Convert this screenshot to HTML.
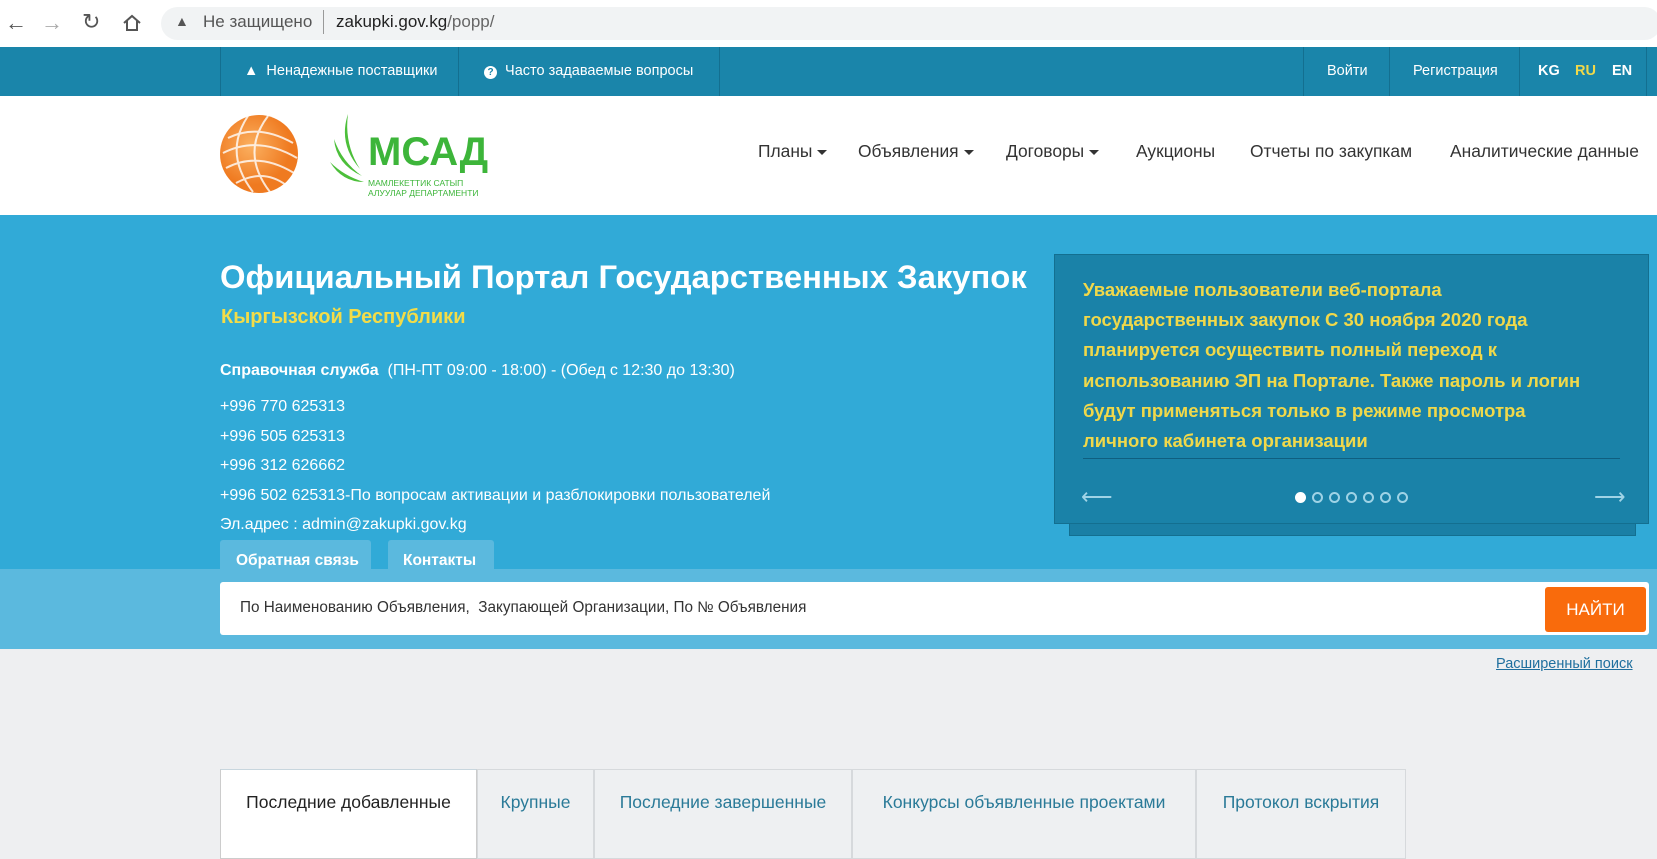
<!DOCTYPE html>
<html><head><meta charset="utf-8"><style>
*{box-sizing:border-box;margin:0;padding:0}
body{width:1657px;height:851px;overflow:hidden;font-family:"Liberation Sans",sans-serif;background:#eeeff1;position:relative}
.a{position:absolute;white-space:nowrap}
#br{left:0;top:0;width:1657px;height:47px;background:#fff}
#pill{left:161px;top:7px;width:1500px;height:33px;background:#f1f3f4;border-radius:17px}
#tb{left:0;top:47px;width:1657px;height:49px;background:#1a85aa}
.dv{position:absolute;top:0;width:1px;height:49px;background:#136f90}
.tt{color:#fff;font-size:14.5px;top:16px}
#hd{left:0;top:96px;width:1657px;height:119px;background:#fff}
.nv{font-size:17.4px;color:#333;top:45px}
.car{display:inline-block;width:0;height:0;border-left:5px solid transparent;border-right:5px solid transparent;border-top:5px solid #333;vertical-align:middle;margin-left:5px}
#hero{left:0;top:215px;width:1657px;height:354px;background:#31aad7}
#sb{left:0;top:569px;width:1657px;height:80px;background:#5bb9de}
.w{color:#fff;font-size:16px}
.tab{position:absolute;top:769px;height:90px;border:1px solid #d6d9dc;background:#eef0f2;color:#2a7a98;font-size:17.5px;text-align:center;padding-top:22px}
</style></head><body>
<div id="br" class="a"></div>
<div class="a" style="left:5px;top:10px;font-size:22px;color:#555">&#8592;</div>
<div class="a" style="left:41px;top:10px;font-size:22px;color:#aaa">&#8594;</div>
<div class="a" style="left:82px;top:9px;font-size:22px;color:#555">&#8635;</div>
<svg class="a" style="left:122px;top:13px" width="20" height="20" viewBox="0 0 20 20"><path d="M2 10 L10 3 L18 10 M5 8 V17 H15 V8" fill="none" stroke="#555" stroke-width="2"/></svg>
<div id="pill" class="a"></div>
<div class="a" style="left:175px;top:13px;font-size:14px;color:#555">&#9650;</div>
<div class="a" style="left:203px;top:12px;font-size:17px;color:#555">Не защищено</div>
<div class="a" style="left:323px;top:10px;width:1px;height:24px;background:#999"></div>
<div class="a" style="left:336px;top:12px;font-size:17px;color:#222">zakupki.gov.kg<span style="color:#666">/popp/</span></div>

<div id="tb" class="a">
<div class="dv" style="left:220px"></div><div class="dv" style="left:458px"></div><div class="dv" style="left:719px"></div>
<div class="dv" style="left:1303px"></div><div class="dv" style="left:1389px"></div><div class="dv" style="left:1519px"></div><div class="dv" style="left:1646px"></div>
<div class="a tt" style="left:244px">&#9650;&nbsp; Ненадежные поставщики</div>
<div class="a tt" style="left:484px"><span style="display:inline-block;width:13px;height:13px;border-radius:50%;background:#fff;color:#1a85aa;font-size:10px;font-weight:bold;text-align:center;line-height:13px">?</span>&nbsp; Часто задаваемые вопросы</div>
<div class="a tt" style="left:1327px">Войти</div>
<div class="a tt" style="left:1413px">Регистрация</div>
<div class="a tt" style="left:1538px;font-weight:bold">KG</div>
<div class="a tt" style="left:1575px;font-weight:bold;color:#f0d84a">RU</div>
<div class="a tt" style="left:1612px;font-weight:bold">EN</div>
</div>

<div id="hd" class="a">
<svg class="a" style="left:218px;top:17px" width="82" height="82" viewBox="0 0 82 82"><defs><radialGradient id="g" cx="40%" cy="40%"><stop offset="0" stop-color="#fbb060"/><stop offset="1" stop-color="#ef7a20"/></radialGradient></defs><circle cx="41" cy="41" r="39" fill="url(#g)"/><g fill="none" stroke="#fff" stroke-width="2" opacity=".8"><path d="M10 25 Q40 10 75 30"/><path d="M5 40 Q40 22 79 45"/><path d="M8 55 Q40 38 76 60"/><path d="M18 70 Q45 55 68 72"/><path d="M30 3 Q5 40 35 79"/><path d="M50 3 Q22 40 52 79"/></g></svg>
<svg class="a" style="left:330px;top:18px" width="40" height="80" viewBox="0 0 40 80"><g fill="#4cbf3a"><path d="M18 0 Q8 30 30 55 Q14 30 18 0Z"/><path d="M4 25 Q6 50 32 62 Q12 48 4 25Z"/><path d="M0 48 Q12 68 34 68 Q14 62 0 48Z"/></g></svg>
<div class="a" style="left:368px;top:34px;font-size:40px;color:#3db53a;font-weight:bold;letter-spacing:0px">МСАД</div>
<div class="a" style="left:368px;top:82px;font-size:8.5px;color:#3db53a">МАМЛЕКЕТТИК САТЫП<br>АЛУУЛАР ДЕПАРТАМЕНТИ</div>
<div class="a nv" style="left:758px">Планы<span class="car"></span></div>
<div class="a nv" style="left:858px">Объявления<span class="car"></span></div>
<div class="a nv" style="left:1006px">Договоры<span class="car"></span></div>
<div class="a nv" style="left:1136px">Аукционы</div>
<div class="a nv" style="left:1250px">Отчеты по закупкам</div>
<div class="a nv" style="left:1450px">Аналитические данные</div>
</div>

<div id="hero" class="a">
<div class="a" style="left:220px;top:43px;font-size:32.8px;font-weight:bold;color:#fff">Официальный Портал Государственных Закупок</div>
<div class="a" style="left:221px;top:91px;font-size:20px;font-weight:bold;color:#f3dc48">Кыргызской Республики</div>
<div class="a w" style="left:220px;top:147px"><b>Справочная служба</b>&nbsp; (ПН-ПТ 09:00 - 18:00) - (Обед с 12:30 до 13:30)</div>
<div class="a w" style="left:220px;top:183px">+996 770 625313</div>
<div class="a w" style="left:220px;top:213px">+996 505 625313</div>
<div class="a w" style="left:220px;top:242px">+996 312 626662</div>
<div class="a w" style="left:220px;top:272px">+996 502 625313-По вопросам активации и разблокировки пользователей</div>
<div class="a w" style="left:220px;top:301px">Эл.адрес : admin@zakupki.gov.kg</div>
<div class="a" style="left:220px;top:325px;width:151px;height:40px;background:#5bb9de;border-radius:3px 3px 0 0;color:#fff;font-weight:bold;font-size:15.5px;padding:12px 0 0 16px">Обратная связь</div>
<div class="a" style="left:388px;top:325px;width:106px;height:40px;background:#5bb9de;border-radius:3px 3px 0 0;color:#fff;font-weight:bold;font-size:15.5px;padding:12px 0 0 15px">Контакты</div>
<div class="a" style="left:1069px;top:300px;width:567px;height:21px;background:#1a7fa5;border:1px solid #136f90"></div>
<div class="a" style="left:1054px;top:39px;width:595px;height:270px;background:#1a82a8;border:1px solid #136f90;overflow:hidden">
<div style="position:absolute;left:28px;top:20px;width:560px;color:#f0d84a;font-weight:bold;font-size:18.5px;line-height:30.2px;white-space:nowrap">Уважаемые пользователи веб-портала<br>государственных закупок С 30 ноября 2020 года<br>планируется осуществить полный переход к<br>использованию ЭП на Портале. Также пароль и логин<br>будут применяться только в режиме просмотра<br>личного кабинета организации<br><span style="color:#fff">Т&nbsp;&nbsp;&nbsp;&nbsp;&nbsp;&nbsp;&nbsp;&nbsp;&nbsp;&nbsp;&nbsp;&nbsp;&nbsp;&nbsp;&nbsp;&nbsp;&nbsp;&nbsp;&nbsp;&nbsp;&nbsp;&nbsp;&nbsp;&nbsp;&nbsp;&nbsp;&nbsp;&nbsp;&nbsp;&nbsp;&nbsp;&nbsp;&nbsp;&nbsp;&nbsp;&nbsp;&nbsp;&nbsp;&nbsp;&nbsp;&nbsp;й</span></div>
<div style="position:absolute;left:28px;top:203px;width:537px;height:90px;background:#1a82a8;border-top:1px solid #0f5f80"></div>
<div style="position:absolute;left:26px;top:229px;color:#9fd3e6;font-size:22px">&#10229;</div>
<div style="position:absolute;left:539px;top:229px;color:#9fd3e6;font-size:22px">&#10230;</div>
<div style="position:absolute;left:240px;top:237px;display:flex;gap:6px"><span style="width:11px;height:11px;border-radius:50%;background:#fff"></span><span style="width:11px;height:11px;border-radius:50%;border:2px solid #9fd3e6"></span><span style="width:11px;height:11px;border-radius:50%;border:2px solid #9fd3e6"></span><span style="width:11px;height:11px;border-radius:50%;border:2px solid #9fd3e6"></span><span style="width:11px;height:11px;border-radius:50%;border:2px solid #9fd3e6"></span><span style="width:11px;height:11px;border-radius:50%;border:2px solid #9fd3e6"></span><span style="width:11px;height:11px;border-radius:50%;border:2px solid #9fd3e6"></span></div>
</div>
</div>

<div id="sb" class="a">
<div class="a" style="left:220px;top:13px;width:1429px;height:53px;background:#fff;border-radius:3px"></div>
<div class="a" style="left:240px;top:30px;font-size:15.3px;color:#333">По Наименованию Объявления,&nbsp; Закупающей Организации, По № Объявления</div>
<div class="a" style="left:1545px;top:18px;width:101px;height:45px;background:#f96b0c;border-radius:3px;color:#fff;font-size:17px;text-align:center;line-height:45px">НАЙТИ</div>
</div>
<div class="a" style="left:1496px;top:656px;font-size:14.5px;color:#1f6f9e;text-decoration:underline">Расширенный поиск</div>

<div class="tab" style="left:220px;width:257px;background:#fff;color:#222;border-color:#c8d6de #ccc #ccc #ccc">Последние добавленные</div>
<div class="tab" style="left:477px;width:117px">Крупные</div>
<div class="tab" style="left:594px;width:258px">Последние завершенные</div>
<div class="tab" style="left:852px;width:344px">Конкурсы объявленные проектами</div>
<div class="tab" style="left:1196px;width:210px">Протокол вскрытия</div>
</body></html>
